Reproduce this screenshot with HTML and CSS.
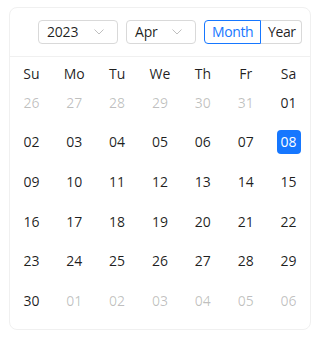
FILE: index.html
```html
<!DOCTYPE html>
<html lang="en">
<head>
<meta charset="utf-8">
<link rel="stylesheet" href="styles.css">
</head>
<body>
<div class="calendar">
  <div class="cal-header">
    <div class="select select-year">
      <span class="select-value">2023</span>
      <svg class="select-arrow" width="10" height="6" viewBox="0 0 10 6"><polyline points="0.5,0.5 5,5 9.5,0.5" fill="none" stroke="currentColor" stroke-width="1"/></svg>
    </div>
    <div class="select select-month">
      <span class="select-value">Apr</span>
      <svg class="select-arrow" width="10" height="6" viewBox="0 0 10 6"><polyline points="0.5,0.5 5,5 9.5,0.5" fill="none" stroke="currentColor" stroke-width="1"/></svg>
    </div>
    <div class="mode-group">
      <span class="mode-btn mode-first mode-checked">Month</span>
      <span class="mode-btn mode-last">Year</span>
    </div>
  </div>
  <div class="cal-panel">
    <div class="cal-grid">
      <div class="wd">Su</div><div class="wd">Mo</div><div class="wd">Tu</div><div class="wd">We</div><div class="wd">Th</div><div class="wd">Fr</div><div class="wd">Sa</div>

      <div class="cell out"><span class="inner">26</span></div>
      <div class="cell out"><span class="inner">27</span></div>
      <div class="cell out"><span class="inner">28</span></div>
      <div class="cell out"><span class="inner">29</span></div>
      <div class="cell out"><span class="inner">30</span></div>
      <div class="cell out"><span class="inner">31</span></div>
      <div class="cell"><span class="inner">01</span></div>

      <div class="cell"><span class="inner">02</span></div>
      <div class="cell"><span class="inner">03</span></div>
      <div class="cell"><span class="inner">04</span></div>
      <div class="cell"><span class="inner">05</span></div>
      <div class="cell"><span class="inner">06</span></div>
      <div class="cell"><span class="inner">07</span></div>
      <div class="cell selected"><span class="inner">08</span></div>

      <div class="cell"><span class="inner">09</span></div>
      <div class="cell"><span class="inner">10</span></div>
      <div class="cell"><span class="inner">11</span></div>
      <div class="cell"><span class="inner">12</span></div>
      <div class="cell"><span class="inner">13</span></div>
      <div class="cell"><span class="inner">14</span></div>
      <div class="cell"><span class="inner">15</span></div>

      <div class="cell"><span class="inner">16</span></div>
      <div class="cell"><span class="inner">17</span></div>
      <div class="cell"><span class="inner">18</span></div>
      <div class="cell"><span class="inner">19</span></div>
      <div class="cell"><span class="inner">20</span></div>
      <div class="cell"><span class="inner">21</span></div>
      <div class="cell"><span class="inner">22</span></div>

      <div class="cell"><span class="inner">23</span></div>
      <div class="cell"><span class="inner">24</span></div>
      <div class="cell"><span class="inner">25</span></div>
      <div class="cell"><span class="inner">26</span></div>
      <div class="cell"><span class="inner">27</span></div>
      <div class="cell"><span class="inner">28</span></div>
      <div class="cell"><span class="inner">29</span></div>

      <div class="cell"><span class="inner">30</span></div>
      <div class="cell out"><span class="inner">01</span></div>
      <div class="cell out"><span class="inner">02</span></div>
      <div class="cell out"><span class="inner">03</span></div>
      <div class="cell out"><span class="inner">04</span></div>
      <div class="cell out"><span class="inner">05</span></div>
      <div class="cell out"><span class="inner">06</span></div>
    </div>
  </div>
</div>
</body>
</html>
```
FILE: styles.css
```css
* { box-sizing: border-box; }
html, body { margin: 0; padding: 0; background: #fff; }
body {
  font-family: "Segoe UI", "Open Sans", "Noto Sans", sans-serif;
  font-size: 14px;
  color: rgba(0, 0, 0, 0.88);
}
.calendar {
  width: 302px;
  margin: 7px 0 0 9px;
  border: 1px solid #f0f0f0;
  border-radius: 8px;
  background: #fff;
}
.cal-header {
  display: flex;
  justify-content: flex-end;
  align-items: center;
  padding: 12px 8px;
  gap: 8px;
}
.select {
  position: relative;
  height: 24px;
  border: 1px solid #d9d9d9;
  border-radius: 4px;
  padding: 0 8px;
  display: flex;
  align-items: center;
  line-height: 22px;
  letter-spacing: -0.2px;
}
.select-year { width: 80px; }
.select-month { width: 70px; }
.select-arrow {
  position: absolute;
  right: 13px;
  top: 8px;
  color: rgba(0, 0, 0, 0.25);
}
.mode-group { display: flex; }
.mode-btn {
  height: 24px;
  line-height: 22px;
  padding: 0 7px;
  border: 1px solid #d9d9d9;
  background: #fff;
  letter-spacing: -0.4px;
}
.mode-first { border-radius: 4px 0 0 4px; width: 57px; }
.mode-last { border-radius: 0 4px 4px 0; border-left: 0; width: 41px; }
.mode-checked { border-color: #1677ff; color: #1677ff; }
.cal-panel {
  border-top: 1px solid #f0f0f0;
  padding: 8px 0;
}
.cal-grid {
  display: grid;
  grid-template-columns: repeat(7, 1fr);
  grid-template-rows: 18px repeat(6, 1fr);
  height: 256px;
}
.wd {
  text-align: center;
  line-height: 18px;
}
.cell {
  display: flex;
  align-items: center;
  justify-content: center;
}
.inner {
  display: inline-block;
  min-width: 24px;
  height: 24px;
  line-height: 24px;
  border-radius: 4px;
  text-align: center;
}
.out { color: rgba(0, 0, 0, 0.25); }
.selected .inner { background: #1677ff; color: #fff; }
```
